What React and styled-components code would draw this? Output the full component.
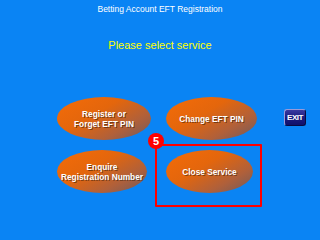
import React from "react";
import styled, { createGlobalStyle } from "styled-components";

const Global = createGlobalStyle`
  html, body { margin: 0; padding: 0; }
  body { font-family: "Liberation Sans", Arial, sans-serif; }
`;

const Page = styled.div`
  width: 320px;
  height: 240px;
  background: #0a84f4;
  display: flex;
  flex-direction: column;
  align-items: center;
  overflow: hidden;
`;

const Header = styled.div`
  height: 19px;
  line-height: 19px;
  color: #ffffff;
  font-size: 8.5px;
  text-align: center;
`;

const Subtitle = styled.div`
  margin-top: 20px;
  height: 12px;
  line-height: 12px;
  color: #ffff00;
  font-size: 11px;
  text-align: center;
`;

const Main = styled.div`
  align-self: stretch;
  margin-top: 46px;
  display: flex;
  align-items: flex-start;
  padding-left: 57px;
`;

const Grid = styled.div`
  display: grid;
  grid-template-columns: 94px 91px;
  column-gap: 15px;
  row-gap: 10px;
`;

const Cell = styled.div`
  position: relative;
  width: ${(p) => p.$w}px;
  height: 43px;
`;

const Oval = styled.div`
  width: 100%;
  height: 100%;
  border-radius: 50%;
  background: linear-gradient(150deg, #f46c08 0%, #e4660c 40%, #b0603a 72%, #6c5a60 100%);
  display: flex;
  align-items: center;
  justify-content: center;
  text-align: center;
  color: #ffffff;
  font-weight: bold;
  font-size: 8.3px;
  line-height: 10px;
  text-shadow: 1px 1px 0 rgba(60, 30, 10, 0.6);
`;

const Highlight = styled.div`
  position: absolute;
  left: -11px;
  top: -6px;
  width: 103px;
  height: 59px;
  border: 2px solid #ff0000;
  border-radius: 1px;
`;

const Badge = styled.div`
  position: absolute;
  left: -18px;
  top: -17px;
  width: 16px;
  height: 16px;
  border-radius: 50%;
  background: #ff0000;
  color: #ffffff;
  font-weight: bold;
  font-size: 11px;
  line-height: 16px;
  text-align: center;
`;

const Exit = styled.div`
  margin-left: 27px;
  margin-top: 12px;
  width: 22px;
  height: 17px;
  box-sizing: border-box;
  border-radius: 3px;
  background: linear-gradient(180deg, #3a3aa0 0%, #1c1c80 50%, #10106a 100%);
  border: 1px solid #9a9ad8;
  border-right-color: #0a0a40;
  border-bottom-color: #0a0a40;
  color: #ffffff;
  font-weight: bold;
  font-size: 8px;
  letter-spacing: -0.5px;
  display: flex;
  align-items: center;
  justify-content: center;
`;

const services = [
  { label: ["Register or", "Forget EFT PIN"], w: 94 },
  { label: ["Change EFT PIN"], w: 91 },
  { label: ["Enquire", "Registration Number"], w: 90 },
  { label: ["Close Service"], w: 87, selected: true },
];

export default function App() {
  return (
    <>
      <Global />
      <Page>
        <Header>Betting Account EFT Registration</Header>
        <Subtitle>Please select service</Subtitle>
        <Main>
          <Grid>
            {services.map((s, i) => (
              <Cell key={i} $w={s.w}>
                {s.selected && <Highlight />}
                <Oval>
                  <div>
                    {s.label.map((l, j) => (
                      <div key={j}>{l}</div>
                    ))}
                  </div>
                </Oval>
                {s.selected && <Badge>5</Badge>}
              </Cell>
            ))}
          </Grid>
          <Exit>EXIT</Exit>
        </Main>
      </Page>
    </>
  );
}
